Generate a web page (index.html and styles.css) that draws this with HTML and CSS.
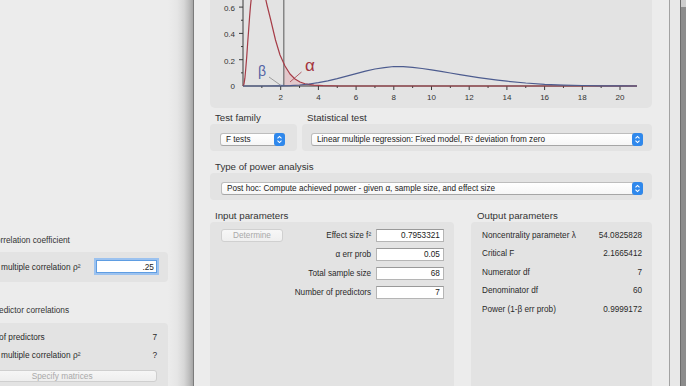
FILE: index.html
```html
<!DOCTYPE html>
<html lang="en">
<head>
  <meta charset="UTF-8">
  <meta name="viewport" content="width=device-width, initial-scale=1.0">
  <title>G*Power</title>
  <link rel="stylesheet" href="styles.css">
</head>
<body>
  <div class="desk">

    <!-- effect size drawer, half hidden behind the main window -->
    <div class="drawer">
      <div class="drawer-inner">
        <div class="d-caption">From correlation coefficient</div>
        <div class="d-box d-direct">
          <span>Squared multiple correlation ρ²</span>
          <input class="d-focus" type="text" value=".25">
        </div>
        <div class="d-caption second">From predictor correlations</div>
        <div class="d-box d-pred">
          <div class="d-row"><span>Number of predictors</span><span>7</span></div>
          <div class="d-row"><span>Squared multiple correlation ρ²</span><span>?</span></div>
          <div class="d-btn">Specify matrices</div>
        </div>
      </div>
    </div>

    <!-- main window -->
    <div class="window">
      <div class="graph">
        <svg width="442" height="108" viewBox="0 0 442 108">
          <!-- alpha / beta areas -->
          <path class="beta-area" d="M62,86 L73.8,83.6 L73.8,86 Z"/>
          <path class="alpha-area" d="M73.8,64 L75,66 L80,74 L85,79 L90,82 L95,83.8 L104,85.2 L113,85.7 L130,86 L73.8,86 Z"/>

          <!-- axes -->
          <path class="axis" d="M33,0 V86 H427"/>
          <path class="axis" d="M29,7.1H33 M31,20.25H33 M29,33.4H33 M31,46.55H33 M29,59.7H33 M31,72.85H33"/>
          <path class="axis" d="M51.85,86V88 M70.7,86V90 M89.55,86V88 M108.4,86V90 M127.25,86V88 M146.1,86V90 M164.95,86V88 M183.8,86V90 M202.65,86V88 M221.5,86V90 M240.35,86V88 M259.2,86V90 M278.05,86V88 M296.9,86V90 M315.75,86V88 M334.6,86V90 M353.45,86V88 M372.3,86V90 M391.15,86V88 M410,86V90"/>

          <!-- critical F -->
          <line class="crit" x1="73.8" y1="0" x2="73.8" y2="86"/>

          <!-- central F (H0) -->
          <path class="h0" d="M33,86 L33.9,84.3 L34.9,78.2 L35.8,68.2 L36.8,55.9 L37.7,42.5 L38.7,29.2 L39.6,16.8 L40.5,5.9 L41.5,-3.3 L42.4,-10.6 L44.5,-19.5 L47,-22 L51,-17 L55,-4 L57,5 L60.5,19 L65.5,40 L70,55 L75,66 L80,74 L85,79 L90,82 L95,83.8 L104,85.2 L113,85.7 L130,86 L427,86"/>

          <!-- noncentral F (H1) -->
          <path class="h1" d="M33,86 L51.85,86 L70.7,85.85 L80.1,85.6 L89.55,85 L99,84 L108.4,82.6 L117.8,80.8 L127.25,78.6 L136.7,76.1 L146.1,73.6 L155.5,71.2 L164.95,69 L174.4,67.6 L183.8,66.5 L193.2,66.7 L202.65,67.4 L212.1,68.5 L221.5,69.9 L230.9,71.4 L240.35,73 L249.8,74.6 L259.2,76.1 L268.6,77.6 L278.05,78.9 L287.5,80.1 L296.9,81.2 L315.75,83 L334.6,84.3 L353.45,85.1 L372.3,85.5 L391.15,85.8 L410,85.9 L427,86"/>

          <!-- labels for the two areas -->
          <line class="beta-ptr" x1="59" y1="77" x2="71" y2="85.5"/>
          <line class="alpha-ptr" x1="91.5" y1="72" x2="80" y2="82"/>
          <text class="beta" x="48" y="75.5">β</text>
          <text class="alpha" x="95" y="70.5">α</text>

          <g class="ylab">
            <text x="25" y="10.6">0.6</text>
            <text x="25" y="36.9">0.4</text>
            <text x="25" y="63.6">0.2</text>
            <text x="25" y="88.9">0</text>
          </g>
          <g class="xlab">
            <text x="70.7" y="99.5">2</text>
            <text x="108.4" y="99.5">4</text>
            <text x="146.1" y="99.5">6</text>
            <text x="183.8" y="99.5">8</text>
            <text x="221.5" y="99.5">10</text>
            <text x="259.2" y="99.5">12</text>
            <text x="296.9" y="99.5">14</text>
            <text x="334.6" y="99.5">16</text>
            <text x="372.3" y="99.5">18</text>
            <text x="410" y="99.5">20</text>
          </g>
        </svg>
      </div>

      <div class="top">
        <div class="group family">
          <div class="caption">Test family</div>
          <div class="box">
            <div class="popup">
              <span>F tests</span>
              <svg class="stepper" width="11" height="13" viewBox="0 0 11 13"><rect width="11" height="13" rx="3"/><path d="M3.5,5.3 L5.5,3.4 L7.5,5.3 M3.5,7.7 L5.5,9.6 L7.5,7.7"/></svg>
            </div>
          </div>
        </div>
        <div class="group stat">
          <div class="caption">Statistical test</div>
          <div class="box">
            <div class="popup">
              <span>Linear multiple regression: Fixed model, R² deviation from zero</span>
              <svg class="stepper" width="11" height="13" viewBox="0 0 11 13"><rect width="11" height="13" rx="3"/><path d="M3.5,5.3 L5.5,3.4 L7.5,5.3 M3.5,7.7 L5.5,9.6 L7.5,7.7"/></svg>
            </div>
          </div>
        </div>
      </div>

      <div class="group power">
        <div class="caption">Type of power analysis</div>
        <div class="box">
          <div class="popup">
            <span>Post hoc: Compute achieved power - given α, sample size, and effect size</span>
            <svg class="stepper" width="11" height="13" viewBox="0 0 11 13"><rect width="11" height="13" rx="3"/><path d="M3.5,5.3 L5.5,3.4 L7.5,5.3 M3.5,7.7 L5.5,9.6 L7.5,7.7"/></svg>
          </div>
        </div>
      </div>

      <div class="io">
        <div class="group inputs">
          <div class="caption">Input parameters</div>
          <div class="panel params">
            <div class="btn">Determine</div>
            <div class="lbl">Effect size f²</div>
            <input class="val" type="text" value="0.7953321">
            <div class="lbl">α err prob</div>
            <input class="val" type="text" value="0.05">
            <div class="lbl">Total sample size</div>
            <input class="val" type="text" value="68">
            <div class="lbl">Number of predictors</div>
            <input class="val" type="text" value="7">
          </div>
        </div>
        <div class="group outputs">
          <div class="caption">Output parameters</div>
          <div class="panel results">
            <div class="res"><span>Noncentrality parameter λ</span><span>54.0825828</span></div>
            <div class="res"><span>Critical F</span><span>2.1665412</span></div>
            <div class="res"><span>Numerator df</span><span>7</span></div>
            <div class="res"><span>Denominator df</span><span>60</span></div>
            <div class="res"><span>Power (1-β err prob)</span><span>0.9999172</span></div>
          </div>
        </div>
      </div>
    </div>

    <!-- edge of the desktop on the right -->
    <div class="edge">
      <div class="edge-light"></div>
      <div class="edge-dark"></div>
    </div>
  </div>
</body>
</html>
```

FILE: styles.css
```css
* {
  box-sizing: border-box;
}
html, body {
  margin: 0;
  height: 100%;
}
body {
  font-family: 'Liberation Sans', Arial, sans-serif;
  font-size: 8.2px;
  color: #2a2a2a;
  background: #ececec;
  overflow: hidden;
}
.desk {
  display: flex;
  width: 686px;
  height: 386px;
}

/* drawer behind the window */
.drawer {
  width: 194px;
  flex-shrink: 0;
  overflow: hidden;
  background: linear-gradient(to right, #ececec 168px, #e6e6e6 177px, #d7d7d7 184px, #bfbfbf 189px, #a5a5a5 193px, #7b7b7b 193px);
}
.drawer-inner {
  margin-left: -40px;
  width: 208px;
  padding-top: 235px;
  font-size: 8.3px;
}
.d-caption {
  height: 11px;
  line-height: 11px;
  padding-left: 10px;
  color: #333;
}
.d-caption.second {
  margin-top: 23.3px;
}
.d-box {
  background: #e3e3e3;
  border-radius: 4px;
}
.d-direct {
  margin-top: 5.7px;
  height: 30px;
  display: flex;
  align-items: center;
  padding: 0 11px 0 7.3px;
}
.d-focus {
  margin: 0 0 0 auto;
  width: 61px;
  height: 13px;
  font: inherit;
  text-align: right;
  padding: 0 2px;
  background: #fff;
  border: 1px solid #5f9de2;
  box-shadow: 0 0 0 2px #9cc2ef;
  outline: none;
  color: #222;
}
.d-pred {
  margin-top: 7.3px;
  padding: 8px 11px 30px 7.3px;
  display: flex;
  flex-direction: column;
  gap: 6px;
}
.d-row {
  height: 12px;
  line-height: 12px;
  display: flex;
  justify-content: space-between;
}
.d-btn {
  margin-top: 3px;
  height: 12px;
  line-height: 10px;
  text-align: center;
  color: #a9a9a9;
  background: linear-gradient(#f6f6f6, #eeeeee);
  border: 1px solid #cfcfcf;
  border-radius: 3px;
}

/* main window */
.window {
  width: 475px;
  flex-shrink: 0;
  background: #ececec;
  padding: 0 17px 0 16px;
  display: flex;
  flex-direction: column;
}
.graph {
  height: 108px;
  flex-shrink: 0;
  background: #e3e3e3;
  border-radius: 0 0 5px 5px;
}
.graph svg {
  display: block;
}
.graph text {
  font-family: 'Liberation Sans', Arial, sans-serif;
  font-size: 8px;
  fill: #333;
}
.graph .ylab text {
  text-anchor: end;
}
.graph .xlab text {
  text-anchor: middle;
}
.axis {
  fill: none;
  stroke: #3a3a3a;
  stroke-width: 1;
}
.crit {
  stroke: #6f6f6f;
  stroke-width: 1.2;
}
.h0, .h1 {
  fill: none;
  stroke-width: 1.2;
  stroke-linejoin: round;
}
.h0 {
  stroke: #a63c47;
}
.h1 {
  stroke: #4d5c8f;
}
.alpha-area {
  fill: rgba(225, 140, 150, 0.3);
}
.beta-area {
  fill: rgba(150, 170, 220, 0.3);
}
.beta-ptr {
  stroke: #8a8a8a;
  stroke-width: 0.8;
}
.alpha-ptr {
  stroke: #a63c47;
  stroke-width: 0.8;
}
.graph text.alpha {
  font-size: 17px;
  fill: #a3323c;
}
.graph text.beta {
  font-size: 14px;
  fill: #5262a3;
}

.caption {
  height: 12px;
  line-height: 12px;
  font-size: 9.7px;
  padding-left: 5px;
  margin-top: 10px;
  color: #333;
}
.top {
  display: flex;
  gap: 5.5px;
}
.top .caption {
  margin-top: 4px;
}
.family {
  width: 86.5px;
}
.stat {
  flex: 1;
}
.box {
  background: #e3e3e3;
  border-radius: 4px;
  padding: 8.5px 9px 5.5px 10px;
}
.family .box {
  padding-right: 11.5px;
}
.stat .box {
  padding-left: 9px;
}
.power .box {
  padding-left: 11px;
}
.popup {
  height: 13px;
  display: flex;
  align-items: center;
  padding-left: 5px;
  background: linear-gradient(#ffffff, #f6f6f6);
  border: 1px solid #bdbdbd;
  border-bottom-color: #a6a6a6;
  border-radius: 3px;
  color: #222;
  white-space: nowrap;
}
.stepper {
  margin: 0 -1px 0 auto;
  flex-shrink: 0;
}
.stepper rect {
  fill: #2f88ec;
}
.stepper path {
  fill: none;
  stroke: #fff;
  stroke-width: 1.1;
}

/* input / output parameters */
.io {
  flex: 1;
  display: flex;
  gap: 17px;
}
.io .group {
  display: flex;
  flex-direction: column;
}
.inputs {
  width: 244px;
}
.outputs {
  flex: 1;
}
.outputs .caption {
  padding-left: 6px;
}
.panel {
  flex: 1;
  background: #e3e3e3;
  border-radius: 4px 4px 0 0;
}
.params {
  display: grid;
  grid-template-columns: 62px 1fr 68.6px;
  grid-auto-rows: 13px;
  column-gap: 4.6px;
  row-gap: 6px;
  align-content: start;
  padding: 7px 9.7px 0 11px;
}
.btn {
  grid-column: 1;
  grid-row: 1;
  line-height: 11px;
  text-align: center;
  color: #a9a9a9;
  background: linear-gradient(#f7f7f7, #efefef);
  border: 1px solid #d0d0d0;
  border-radius: 3px;
}
.lbl {
  grid-column: 2;
  text-align: right;
  line-height: 13px;
}
.val {
  grid-column: 3;
  margin: 0;
  width: 100%;
  height: 13px;
  font: inherit;
  color: #222;
  text-align: right;
  padding: 0 3.5px;
  background: #fff;
  border: 1px solid #b5b5b5;
  border-top-color: #999;
  outline: none;
}
.results {
  display: flex;
  flex-direction: column;
  gap: 5.5px;
  padding: 6.5px 10px 0 11px;
}
.res {
  height: 13px;
  line-height: 13px;
  display: flex;
  justify-content: space-between;
}

/* right edge */
.edge {
  width: 17px;
  flex-shrink: 0;
  display: flex;
  border-left: 1px solid #a2a2a2;
}
.edge-light {
  width: 10px;
  background: #e8e8e8;
}
.edge-dark {
  flex: 1;
  border-left: 1px solid #6c6c6c;
  background: linear-gradient(#cdcdcd 7px, #8c8c8c 7px);
}
```
